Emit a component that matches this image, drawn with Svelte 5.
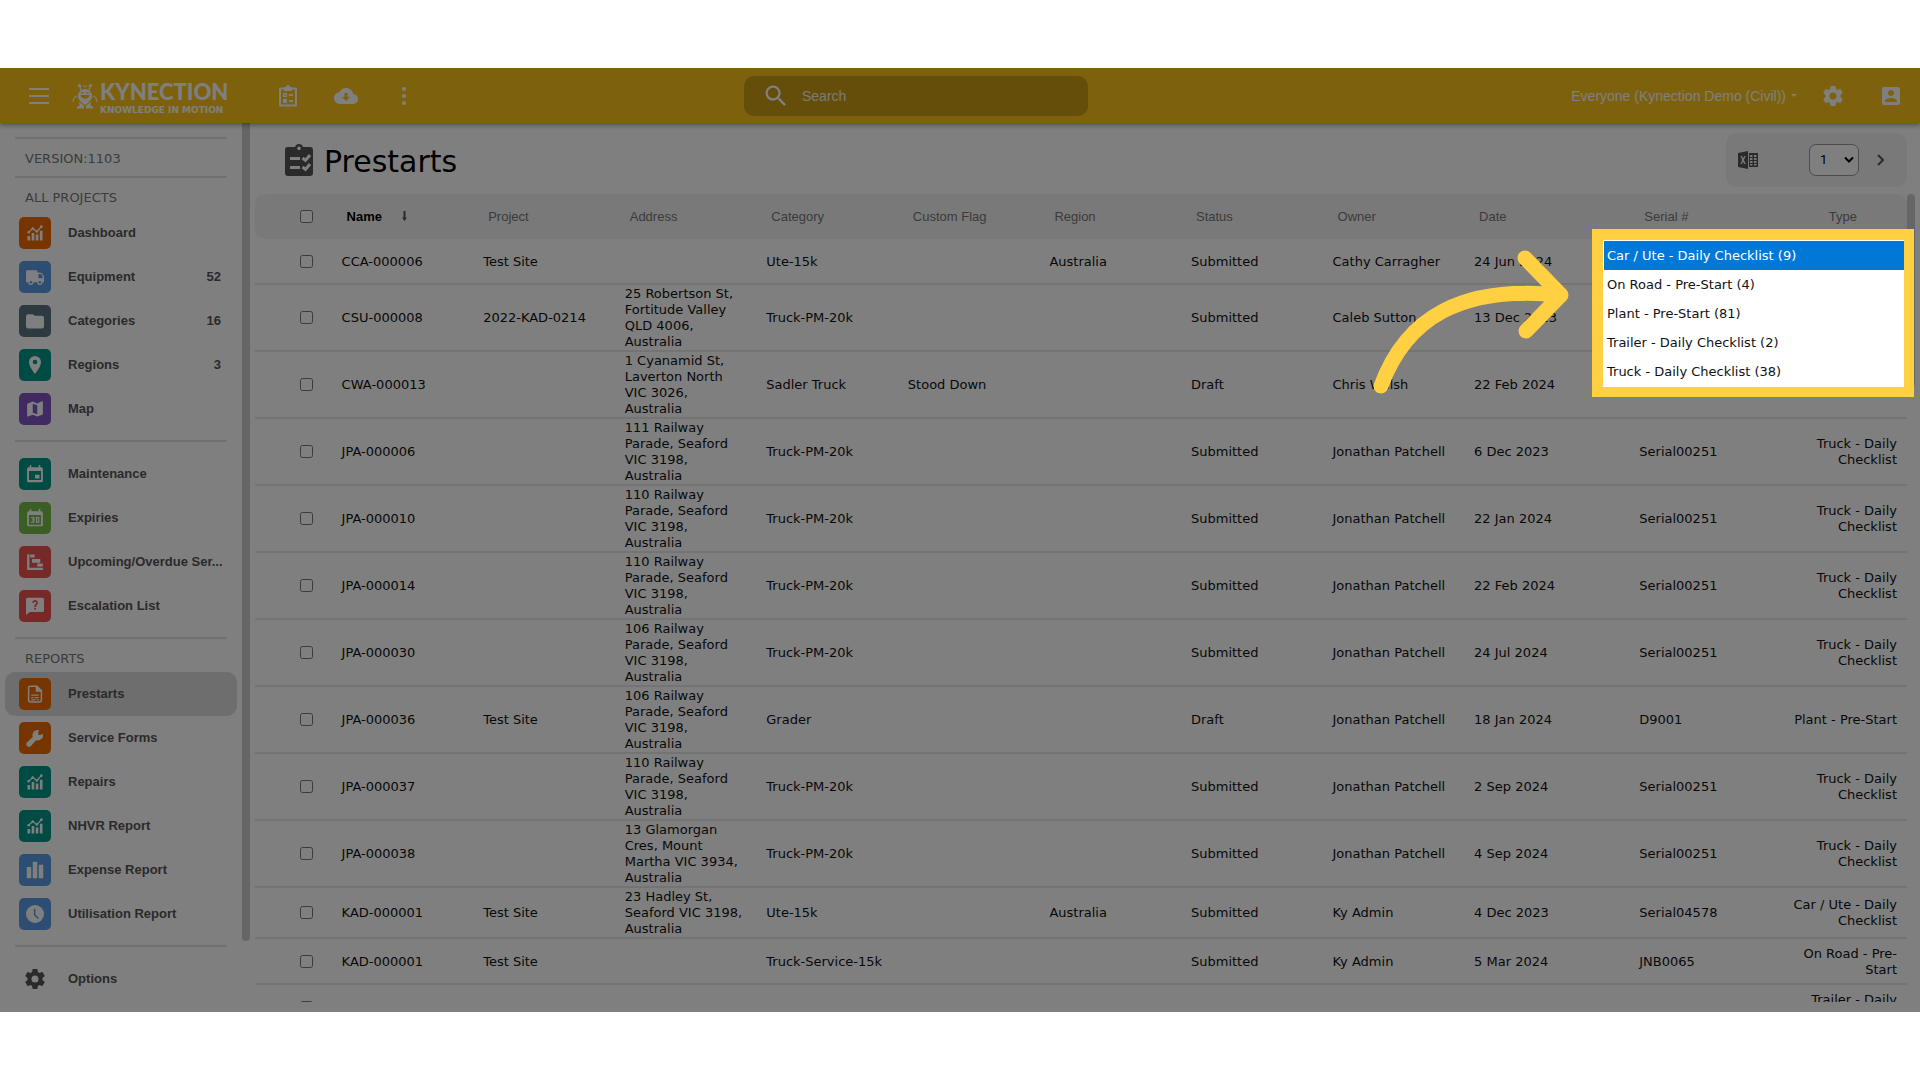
<script>
  const overview = [
    { label: 'Dashboard', icon: 'chart', tone: 'orange' },
    { label: 'Equipment', icon: 'truck', tone: 'blue', count: 52 },
    { label: 'Categories', icon: 'folder', tone: 'slate', count: 16 },
    { label: 'Regions', icon: 'marker', tone: 'teal', count: 3 },
    { label: 'Map', icon: 'map', tone: 'purple' }
  ];

  const upkeep = [
    { label: 'Maintenance', icon: 'calendar', tone: 'teal' },
    { label: 'Expiries', icon: 'expiry', tone: 'green' },
    { label: 'Upcoming/Overdue Ser...', icon: 'gantt', tone: 'red' },
    { label: 'Escalation List', icon: 'question', tone: 'red' }
  ];

  const reports = [
    { label: 'Prestarts', icon: 'file', tone: 'orange', active: true },
    { label: 'Service Forms', icon: 'wrench', tone: 'orange' },
    { label: 'Repairs', icon: 'chart', tone: 'teal' },
    { label: 'NHVR Report', icon: 'chart', tone: 'teal' },
    { label: 'Expense Report', icon: 'bars', tone: 'blue' },
    { label: 'Utilisation Report', icon: 'clock', tone: 'blue' }
  ];

  const options = [{ label: 'Options', icon: 'cog', tone: 'plain' }];

  const columns = ['Project', 'Address', 'Category', 'Custom Flag', 'Region', 'Status', 'Owner', 'Date', 'Serial #', 'Type'];

  const truck = 'Truck - Daily Checklist';
  const rows = [
    ['CCA-000006', 'Test Site', '', 'Ute-15k', '', 'Australia', 'Submitted', 'Cathy Carragher', '24 Jun 2024', '', 'Car / Ute - Daily Checklist'],
    ['CSU-000008', '2022-KAD-0214', '25 Robertson St, Fortitude Valley QLD 4006, Australia', 'Truck-PM-20k', '', '', 'Submitted', 'Caleb Sutton', '13 Dec 2023', '', truck],
    ['CWA-000013', '', '1 Cyanamid St, Laverton North VIC 3026, Australia', 'Sadler Truck', 'Stood Down', '', 'Draft', 'Chris Walsh', '22 Feb 2024', '', truck],
    ['JPA-000006', '', '111 Railway Parade, Seaford VIC 3198, Australia', 'Truck-PM-20k', '', '', 'Submitted', 'Jonathan Patchell', '6 Dec 2023', 'Serial00251', truck],
    ['JPA-000010', '', '110 Railway Parade, Seaford VIC 3198, Australia', 'Truck-PM-20k', '', '', 'Submitted', 'Jonathan Patchell', '22 Jan 2024', 'Serial00251', truck],
    ['JPA-000014', '', '110 Railway Parade, Seaford VIC 3198, Australia', 'Truck-PM-20k', '', '', 'Submitted', 'Jonathan Patchell', '22 Feb 2024', 'Serial00251', truck],
    ['JPA-000030', '', '106 Railway Parade, Seaford VIC 3198, Australia', 'Truck-PM-20k', '', '', 'Submitted', 'Jonathan Patchell', '24 Jul 2024', 'Serial00251', truck],
    ['JPA-000036', 'Test Site', '106 Railway Parade, Seaford VIC 3198, Australia', 'Grader', '', '', 'Draft', 'Jonathan Patchell', '18 Jan 2024', 'D9001', 'Plant - Pre-Start'],
    ['JPA-000037', '', '110 Railway Parade, Seaford VIC 3198, Australia', 'Truck-PM-20k', '', '', 'Submitted', 'Jonathan Patchell', '2 Sep 2024', 'Serial00251', truck],
    ['JPA-000038', '', '13 Glamorgan Cres, Mount Martha VIC 3934, Australia', 'Truck-PM-20k', '', '', 'Submitted', 'Jonathan Patchell', '4 Sep 2024', 'Serial00251', truck],
    ['KAD-000001', 'Test Site', '23 Hadley St, Seaford VIC 3198, Australia', 'Ute-15k', '', 'Australia', 'Submitted', 'Ky Admin', '4 Dec 2023', 'Serial04578', 'Car / Ute - Daily Checklist'],
    ['KAD-000001', 'Test Site', '', 'Truck-Service-15k', '', '', 'Submitted', 'Ky Admin', '5 Mar 2024', 'JNB0065', 'On Road - Pre-Start'],
    ['', '', '', '', '', '', '', '', '', '', 'Trailer - Daily Checklist']
  ];

  const types = [
    'Car / Ute - Daily Checklist (9)',
    'On Road - Pre-Start (4)',
    'Plant - Pre-Start (81)',
    'Trailer - Daily Checklist (2)',
    'Truck - Daily Checklist (38)'
  ];
  let selectedType = $state(types[0]);
  let page = $state('1');
</script>

{#snippet icon(name)}
  <svg class="icon" viewBox="0 0 24 24" aria-hidden="true">
    {#if name === 'chart'}
      <path d="M2 16h3.500v6H2zM7.500 12h3.500v10H7.500zM13 14h3.500v8H13zM18.500 9h3.500v13h-3.500z" />
      <path d="M3.500 11 9 6l5.500 4L20.500 3.500" fill="none" stroke="currentColor" stroke-width="1.800" />
      <circle cx="3.500" cy="11" r="1.700" /><circle cx="9" cy="6" r="1.700" />
      <circle cx="14.500" cy="10" r="1.700" /><circle cx="20.500" cy="3.500" r="1.800" />
    {:else if name === 'truck'}
      <path fill-rule="evenodd" d="M2 3h12a1 1 0 0 1 1 1v2h2.500a6.500 6.500 0 0 1 6.500 6.500V19h-2a3.500 3.500 0 0 1-7 0h-5a3.500 3.500 0 0 1-7 0H0V5a2 2 0 0 1 2-2M16.500 8v5.500H22V12a4 4 0 0 0-4-4zM6.500 17.200a1.800 1.800 0 1 0 .01 0M18.500 17.200a1.800 1.800 0 1 0 .01 0" />
    {:else if name === 'folder'}
      <path d="M9 3H3a3 3 0 0 0-3 3v13a3 3 0 0 0 3 3h18a3 3 0 0 0 3-3V8a3 3 0 0 0-3-3H12z" />
    {:else if name === 'marker'}
      <path d="M12 0a8 8 0 0 0-8 8c0 6.500 8 16 8 16s8-9.500 8-16a8 8 0 0 0-8-8m0 11a3 3 0 1 1 0-6 3 3 0 0 1 0 6" />
    {:else if name === 'map'}
      <path d="M15,19L9,16.890V5L15,7.110M20.500,2L15,4.500L9,2L2.500,4.500C2,4.700 1.500,5 1.500,5.500V21.500C1.500,22 2,22.300 2.500,22L9,19.500L15,22L21.500,19.800C22,19.600 22.500,19.300 22.500,18.800V2.500C22.500,2 22,1.700 21.500,1.800Z" />
    {:else if name === 'calendar'}
      <path d="M20,20H4V8H20M17,0V3H7V0H5V3H4C2.500,3 1.500,3.900 1.500,5V20.500A2,2 0 0,0 3.500,23H20.500A2,2 0 0,0 22.500,20.500V5C22.500,3.900 21.500,3 20,3H19V0M18,13H12V18H18V13Z" />
    {:else if name === 'expiry'}
      <path d="M20,21H4V8H20M17,0V3H7V0H5V3H4C2.500,3 1.500,3.900 1.500,5V21A2,2 0 0,0 3.500,23H20.500A2,2 0 0,0 22.500,21V5C22.500,3.900 21.500,3 20,3H19V0Z" />
      <path d="M7 11.500h3.500v6H7M8 14.500h2.500M14 11.500h3v6h-3z" fill="none" stroke="currentColor" stroke-width="1.500" />
    {:else if name === 'gantt'}
      <path d="M1.500 1.500h3v18h18v3h-21zM5.500 2h6v4h-6zM8 8h11v5H8zM15 14h7.500v4H15z" />
    {:else if name === 'question'}
      <path fill-rule="evenodd" d="M22 1H2a2 2 0 0 0-2 2v21l5-4h17a2 2 0 0 0 2-2V3a2 2 0 0 0-2-2M11 14.500h2.300v2.300H11zM8.300 7.500C8.300 2.800 15.800 2.800 15.800 7.500c0 3-2.600 3-2.600 5.800h-2.300c0-3.800 2.600-3.800 2.600-5.800 0-1.700-2.900-1.700-2.900 0z" />
    {:else if name === 'file'}
      <path d="M5 1.500h9.500l6 6V20A2.500 2.500 0 0 1 18 22.500H6A2.500 2.500 0 0 1 3.500 20V3A1.500 1.500 0 0 1 5 1.500" fill="none" stroke="currentColor" stroke-width="2" />
      <path d="M13 1v8h8l-8-8M7 12.500h10v1.800H7zM7 16h3v1.800H7zM11.500 16H17v1.800h-5.500zM7 19h6v1.500H7zM14.500 19H17v1.500h-2.500z" />
    {:else if name === 'wrench'}
      <path d="M22.500 6.500a7 7 0 0 1-9 8.500l-7 7.500a3.500 3.500 0 0 1-5-5l7.500-7a7 7 0 0 1 8.500-9L16 5l.5 2.500L19 8z" />
    {:else if name === 'bars'}
      <path d="M1 8h6v15H1zM9 1h6v22H9zM17 5h6v18h-6z" />
    {:else if name === 'clock'}
      <circle cx="12" cy="12" r="12" />
      <path class="cut" d="M11.500 5v8l5 5" />
    {:else if name === 'cog'}
      <path d="M12,15.500A3.500,3.500 0 0,1 8.500,12A3.500,3.500 0 0,1 12,8.500A3.500,3.500 0 0,1 15.500,12A3.500,3.500 0 0,1 12,15.500M19.430,12.970C19.470,12.650 19.500,12.330 19.500,12C19.500,11.670 19.470,11.340 19.430,11L21.540,9.370C21.730,9.220 21.780,8.950 21.660,8.730L19.660,5.270C19.540,5.050 19.270,4.960 19.050,5.050L16.560,6.050C16.040,5.660 15.500,5.320 14.870,5.070L14.500,2.420C14.460,2.180 14.250,2 14,2H10C9.750,2 9.540,2.180 9.500,2.420L9.130,5.070C8.500,5.320 7.960,5.660 7.440,6.050L4.950,5.050C4.730,4.960 4.460,5.050 4.340,5.270L2.340,8.730C2.210,8.950 2.270,9.220 2.460,9.370L4.570,11C4.530,11.340 4.500,11.670 4.500,12C4.500,12.330 4.530,12.650 4.570,12.970L2.460,14.630C2.270,14.780 2.210,15.050 2.340,15.270L4.340,18.730C4.460,18.950 4.730,19.030 4.950,18.950L7.440,17.940C7.960,18.340 8.500,18.680 9.130,18.930L9.500,21.580C9.540,21.820 9.750,22 10,22H14C14.250,22 14.460,21.820 14.500,21.580L14.870,18.930C15.500,18.670 16.040,18.340 16.560,17.940L19.050,18.950C19.270,19.030 19.540,18.950 19.660,18.730L21.660,15.270C21.780,15.050 21.730,14.780 21.540,14.630L19.430,12.970Z" />
    {:else if name === 'cloud'}
      <path d="M19.350 10.040C18.670 6.590 15.640 4 12 4 9.110 4 6.600 5.640 5.350 8.040 2.340 8.360 0 10.910 0 14c0 3.310 2.690 6 6 6h13c2.760 0 5-2.240 5-5 0-2.640-2.050-4.780-4.650-4.960zM16 13l-4 4-4-4h2.500V9h3v4z" />
    {:else if name === 'account'}
      <path d="M3 5v14c0 1.100.89 2 2 2h14c1.100 0 2-.9 2-2V5c0-1.100-.9-2-2-2H5c-1.110 0-2 .9-2 2zm12 4c0 1.660-1.340 3-3 3s-3-1.340-3-3 1.340-3 3-3 3 1.340 3 3zm-9 8c0-2 4-3.100 6-3.100s6 1.100 6 3.100v1H6v-1z" />
    {:else if name === 'search'}
      <path d="M9.500,3A6.500,6.500 0 0,1 16,9.500C16,11.110 15.410,12.590 14.440,13.730L14.710,14H15.500L20.500,19L19,20.500L14,15.500V14.710L13.730,14.440C12.590,15.410 11.110,16 9.500,16A6.500,6.500 0 0,1 3,9.500A6.500,6.500 0 0,1 9.500,3M9.500,5C7,5 5,7 5,9.500C5,12 7,14 9.500,14C12,14 14,12 14,9.500C14,7 12,5 9.500,5Z" />
    {:else if name === 'clipboard'}
      <path d="M4 4.500h16v17H4z" fill="none" stroke="currentColor" stroke-width="2" stroke-linejoin="round" />
      <path fill-rule="evenodd" d="M8 3h2a2 2 0 0 1 4 0h2v4H8zM7 9h4v4H7zm1.300 1.300v1.400h1.400v-1.400zM7 15h4v4H7zM13 10h4v2h-4zM13 16h4v2h-4z" />
    {:else if name === 'dots'}
      <circle cx="12" cy="5" r="2" /><circle cx="12" cy="12" r="2" /><circle cx="12" cy="19" r="2" />
    {/if}
  </svg>
{/snippet}

{#snippet menu(items)}
  <ul>
    {#each items as item}
      <li>
        <a href="#{item.icon}" class="nav-item" class:active={item.active}>
          <span class="tile {item.tone}">{@render icon(item.icon)}</span>
          <span class="label">{item.label}</span>
          {#if item.count}<span class="count">{item.count}</span>{/if}
        </a>
      </li>
    {/each}
  </ul>
{/snippet}

<div class="page">
  <div class="app">
    <header>
      <div class="header-left">
        <button class="icon-btn burger" aria-label="Menu"><span></span><span></span><span></span></button>
        <a href="#home" class="logo">
          <svg class="robot" viewBox="0 0 26 26" aria-hidden="true">
            <path d="M9 7 7.500 2M17 7l1.500-5M5 13c-3 1-4 3-4 6M21 13c3 1 4 3 4 6" fill="none" stroke="currentColor" stroke-width="1.200" />
            <circle cx="7.500" cy="2.500" r="1.600" /><circle cx="18.500" cy="2.500" r="1.600" />
            <path d="M11 2.500l2 1.500 2-1.500" fill="none" stroke="currentColor" />
            <path fill-rule="evenodd" d="M13 6c4 0 7 3 7 7s-3 6-7 9c-4-3-7-5-7-9s3-7 7-7m-4.500 6c0 5 9 5 9 0zM9.500 9h2v1.500h-2zM14.500 9h2v1.500h-2z" />
            <path d="M7 19l5 3.500V25.500H4.500c0-2 2-2.500 3-3zM19 19l-5 3.500V25.500h7.500c0-2-2-2.500-3-3z" />
          </svg>
          <span class="brand">
            <span class="brand-name">KYNECTION</span>
            <span class="brand-tag">KNOWLEDGE IN MOTION</span>
          </span>
        </a>
        <div class="tools">
          <button class="icon-btn" aria-label="Forms">{@render icon('clipboard')}</button>
          <button class="icon-btn" aria-label="Download">{@render icon('cloud')}</button>
          <button class="icon-btn" aria-label="More">{@render icon('dots')}</button>
        </div>
      </div>
      <label class="search">
        {@render icon('search')}
        <input type="text" placeholder="Search" aria-label="Search" />
      </label>
      <div class="header-right">
        <button class="account">Everyone (Kynection Demo (Civil))<span class="caret"></span></button>
        <button class="icon-btn" aria-label="Settings">{@render icon('cog')}</button>
        <button class="icon-btn" aria-label="Profile">{@render icon('account')}</button>
      </div>
    </header>

    <div class="body">
      <nav>
        <hr />
        <p class="version">VERSION:1103</p>
        <hr />
        <h2>ALL PROJECTS</h2>
        {@render menu(overview)}
        <hr class="spaced" />
        {@render menu(upkeep)}
        <hr class="spaced-top" />
        <h2>REPORTS</h2>
        {@render menu(reports)}
        <hr class="spaced" />
        {@render menu(options)}
      </nav>
      <div class="nav-scroll"></div>

      <main>
        <div class="title-bar">
          <svg class="title-icon" viewBox="0 0 28 32" aria-hidden="true">
            <path fill-rule="evenodd" d="M3 3h7a4.200 4.200 0 0 1 8 0h7a3 3 0 0 1 3 3v23a3 3 0 0 1-3 3H3a3 3 0 0 1-3-3V6a3 3 0 0 1 3-3M14 2.500a1.800 1.800 0 1 0 .01 0M5 13v3h10v-3zM5 22v3h10v-3z" />
            <path class="ticks" d="M17.500 14l3 2.500 4.500-5.500M17.500 23l3 2.500 4.500-5.500" />
          </svg>
          <h1>Prestarts</h1>
          <div class="toolbar">
            <button class="icon-btn excel" aria-label="Export to Excel">
              <svg viewBox="0 0 20 18" aria-hidden="true">
                <path fill-rule="evenodd" d="M0 2 10 0v18L0 16zM2.500 5l1.700 4-1.800 4h1.500L5 10.500 6.200 13h1.600L5.900 9l1.800-4H6.200L5.100 7.500 4 5z" />
                <path fill-rule="evenodd" d="M11 2h9v14h-9zM12 4v2h2.500V4zM16 4v2h2.500V4zM12 7v2h2.500V7zM16 7v2h2.500V7zM12 10v2h2.500v-2zM16 10v2h2.500v-2zM12 13v1.500h2.500V13zM16 13v1.500h2.500V13z" />
              </svg>
            </button>
            <span class="pager">
              <select bind:value={page} aria-label="Page">
                <option>1</option>
                <option>2</option>
              </select>
              <svg class="chevron" viewBox="0 0 10 8" aria-hidden="true"><path d="M1 1.500l4 4 4-4" /></svg>
            </span>
            <button class="icon-btn next" aria-label="Next page">
              <svg viewBox="0 0 8 12" aria-hidden="true"><path d="M1 1l5 5-5 5" /></svg>
            </button>
          </div>
        </div>

        <div class="grid">
          <div class="table-wrap">
            <table>
              <colgroup>
                <col class="col-check" />
                {#each { length: 8 } as _}<col class="col-std" />{/each}
                <col class="col-date" />
                <col class="col-std" />
                <col />
              </colgroup>
              <thead>
                <tr>
                  <th class="check"><input type="checkbox" aria-label="Select all" /></th>
                  <th class="sorted">Name
                    <svg class="sort" viewBox="0 0 5 10" aria-hidden="true"><path d="M1.500 0h2v6.500H5L2.500 10 0 6.500h1.500z" /></svg>
                  </th>
                  {#each columns as column}
                    <th>{column}</th>
                  {/each}
                </tr>
              </thead>
              <tbody>
                {#each rows as row}
                  <tr>
                    <td class="check"><input type="checkbox" aria-label="Select row" /></td>
                    {#each row as cell}
                      <td>{cell}</td>
                    {/each}
                  </tr>
                {/each}
              </tbody>
            </table>
          </div>
          <div class="grid-scroll"></div>
        </div>
      </main>
    </div>

    <div class="shade"></div>

    <svg class="arrow" viewBox="0 0 196 145" aria-hidden="true">
      <path d="M8 136C33 68 88 35 186 45M152 8l36 37-35 36" />
    </svg>

    <div class="callout">
      <select size="5" bind:value={selectedType} aria-label="Prestart type">
        {#each types as type}
          <option class:picked={type === selectedType}>{type}</option>
        {/each}
      </select>
    </div>
  </div>
</div>

<style>
  :global(body) {
    margin: 0;
    background: #fff;
  }

  .page {
    box-sizing: border-box;
    height: 100vh;
    padding: 68px 0;
    font-family: Verdana, "DejaVu Sans", sans-serif;
    font-size: 13px;
    line-height: 16px;
    color: #111;
  }

  .app {
    position: relative;
    display: flex;
    flex-direction: column;
    height: 100%;
    overflow: hidden;
    background: #fff;
  }

  button, input, select {
    font: inherit;
    color: inherit;
  }

  a {
    color: inherit;
    text-decoration: none;
  }

  .icon {
    display: block;
    width: 24px;
    height: 24px;
    fill: currentColor;
    flex: none;
  }

  .icon-btn {
    display: block;
    padding: 0;
    border: 0;
    background: none;
    cursor: pointer;
  }

  header {
    display: flex;
    align-items: center;
    flex: none;
    height: 55px;
    box-sizing: border-box;
    background: #fac31a;
    color: #fff;
    font-family: Arial, "Liberation Sans", sans-serif;
    font-size: 14px;
    box-shadow: 0 2px 5px rgba(0, 0, 0, 0.4);
    z-index: 1;
  }

  .header-left {
    display: flex;
    align-items: center;
    box-sizing: border-box;
    width: 38.75%;
    padding-left: 29px;
  }

  .burger {
    display: flex;
    flex-direction: column;
    gap: 5px;
    width: 20px;
  }

  .burger span {
    height: 2px;
    background: #fff;
  }

  .logo {
    display: flex;
    align-items: center;
    gap: 2px;
    margin-left: 23px;
    width: 204px;
  }

  .robot {
    width: 26px;
    height: 26px;
    fill: currentColor;
  }

  .brand {
    display: flex;
    flex-direction: column;
    padding-top: 2px;
  }

  .brand-name {
    font: 900 22px/26px Lato, sans-serif;
  }

  .brand-tag {
    font: bold 9px/10px "DejaVu Sans", sans-serif;
    white-space: nowrap;
  }

  .tools {
    display: flex;
    gap: 34px;
  }

  .search {
    display: flex;
    align-items: center;
    gap: 12px;
    box-sizing: border-box;
    width: 344px;
    height: 40px;
    padding: 0 18px;
    border-radius: 10px;
    background: rgba(0, 0, 0, 0.2);
  }

  .search .icon {
    width: 28px;
    height: 28px;
  }

  .search input {
    flex: 1;
    min-width: 0;
    padding: 0;
    border: 0;
    background: none;
    outline: none;
  }

  .search input::placeholder {
    color: #fff;
    opacity: 0.9;
  }

  .header-right {
    display: flex;
    align-items: center;
    gap: 34px;
    margin-left: auto;
    padding-right: 17px;
  }

  .account {
    display: flex;
    align-items: center;
    gap: 5px;
    padding: 0;
    border: 0;
    margin-right: -10px;
    background: none;
  }

  .caret {
    border: 3px solid transparent;
    border-top-color: #fff;
    border-bottom: 0;
  }

  .body {
    display: flex;
    flex: 1;
    min-height: 0;
  }

  nav {
    flex: none;
    width: 242px;
    padding-top: 14px;
    box-sizing: border-box;
    color: #777;
  }

  hr {
    height: 2px;
    margin: 0 15px;
    border: 0;
    background: #e2e2e2;
  }

  hr.spaced {
    margin: 9px 15px 10px;
  }

  hr.spaced-top {
    margin-top: 9px;
  }

  .version {
    margin: 0;
    padding: 12px 25px 9px;
  }

  h2 {
    margin: 0;
    padding: 12px 25px 5px;
    font-size: 13px;
    font-weight: normal;
  }

  ul {
    margin: 0;
    padding: 0 5px;
    list-style: none;
  }

  .nav-item {
    display: flex;
    align-items: center;
    height: 44px;
    padding: 0 16px 0 14px;
    box-sizing: border-box;
    border-radius: 10px;
    font-family: Arial, "Liberation Sans", sans-serif;
    font-weight: bold;
    color: #555;
    white-space: nowrap;
  }

  .nav-item.active {
    background: #dcdcdc;
  }

  .tile {
    display: grid;
    place-items: center;
    width: 32px;
    height: 32px;
    border-radius: 5px;
    color: #fff;
  }

  .tile .icon {
    width: 18px;
    height: 18px;
  }

  .label {
    width: 158px;
    margin-left: 17px;
    margin-right: -24px;
  }

  .count {
    margin-left: auto;
  }

  .orange { background: #ef6c00; }
  .blue { background: #5a9ae6; }
  .slate { background: #5a747f; }
  .teal { background: #009688; }
  .purple { background: #7e57c2; }
  .green { background: #76bd48; }
  .red { background: #ef5350; }

  .plain {
    color: #555;
  }

  .plain .icon {
    width: 24px;
    height: 24px;
  }

  .cut {
    fill: none;
    stroke: #5a9ae6;
    stroke-width: 2;
  }

  .nav-scroll {
    flex: none;
    align-self: flex-start;
    width: 8px;
    height: 92%;
    border-radius: 0 0 4px 4px;
    background: #ccc;
  }

  main {
    display: flex;
    flex-direction: column;
    flex: 1;
    min-width: 0;
    padding: 10px 5px 10px;
  }

  .title-bar {
    display: flex;
    align-items: center;
    height: 54px;
    margin-bottom: 7px;
    padding: 0 0 0 30px;
  }

  .title-icon {
    width: 28px;
    height: 32px;
    fill: #555;
  }

  .ticks {
    fill: none;
    stroke: #fff;
    stroke-width: 3;
  }

  h1 {
    margin: 0 0 0 11px;
    padding-top: 3px;
    font-size: 30px;
    line-height: 36px;
    font-weight: normal;
    color: #000;
  }

  .toolbar {
    display: flex;
    align-items: center;
    box-sizing: border-box;
    width: 181px;
    height: 54px;
    margin: 0 8px 0 auto;
    padding: 0 22px 0 12px;
    border-radius: 10px;
    background: #f3f3f3;
  }

  .excel svg {
    display: block;
    width: 20px;
    height: 18px;
    fill: #555;
  }

  .pager {
    position: relative;
    margin-left: auto;
  }

  .pager select {
    display: block;
    appearance: none;
    width: 50px;
    height: 32px;
    padding: 0 10px;
    border: 1px solid #999;
    border-radius: 7px;
    background: #fff;
    color: #000;
    font-family: Roboto, sans-serif;
  }

  .chevron {
    position: absolute;
    right: 5px;
    top: 12px;
    width: 10px;
    height: 8px;
    fill: none;
    stroke: #000;
    stroke-width: 2;
    pointer-events: none;
  }

  .next {
    margin-left: 18px;
  }

  .next svg {
    display: block;
    width: 8px;
    height: 12px;
    fill: none;
    stroke: #555;
    stroke-width: 2;
  }

  .grid {
    display: flex;
    flex: 1;
    min-height: 0;
  }

  .table-wrap {
    flex: 1;
    overflow: hidden;
  }

  .grid-scroll {
    width: 8px;
    height: 193px;
    border-radius: 4px;
    background: #ccc;
  }

  table {
    width: 100%;
    table-layout: fixed;
    border-spacing: 0;
  }

  .col-check { width: 5%; }
  .col-std { width: 8.57%; }
  .col-date { width: 10%; }

  th {
    height: 45px;
    padding: 0 9px;
    box-sizing: border-box;
    background: #f3f3f3;
    font-family: Arial, "Liberation Sans", sans-serif;
    font-weight: normal;
    text-align: left;
    color: #777;
  }

  th:first-child {
    border-radius: 10px 0 0 10px;
  }

  th:last-child {
    padding-right: 50px;
    border-radius: 0 10px 10px 0;
    text-align: right;
  }

  th.sorted {
    font-weight: bold;
    color: #000;
  }

  .sort {
    width: 5px;
    height: 10px;
    margin-left: 16px;
    fill: #555;
  }

  td {
    height: 46px;
    padding: 1px 16px 0 4px;
    box-sizing: border-box;
    border-bottom: 2px solid #e8e8e8;
  }

  td:last-child {
    padding-right: 10px;
    text-align: right;
  }

  .check {
    padding: 0 0 0 45px;
  }

  .check input {
    display: block;
    width: 13px;
    height: 13px;
    margin: 0;
  }

  .shade {
    position: absolute;
    inset: 0;
    z-index: 2;
    background: rgba(0, 0, 0, 0.5);
    pointer-events: none;
  }

  .arrow {
    position: absolute;
    z-index: 3;
    top: 182px;
    right: 351px;
    width: 196px;
    height: 145px;
    fill: none;
    stroke: #ffd142;
    stroke-width: 15;
    stroke-linecap: round;
    stroke-linejoin: round;
    pointer-events: none;
  }

  .callout {
    position: absolute;
    z-index: 3;
    top: 161px;
    right: 6px;
    box-sizing: border-box;
    width: 322px;
    border: solid #ffd142;
    border-width: 11px 10px 10px 11px;
    background: #fff;
  }

  .callout select {
    display: block;
    width: 100%;
    height: 147px;
    padding: 1px 0 0 1px;
    box-sizing: border-box;
    border: 0;
    outline: none;
    overflow: hidden;
    background: #fff;
    color: #111;
  }

  .callout option {
    height: 29px;
    min-height: 29px;
    padding: 7px 3px 0;
    box-sizing: border-box;
  }

  .callout option.picked {
    background: #0078d7 linear-gradient(#0078d7, #0078d7);
    color: #fff;
  }
</style>
